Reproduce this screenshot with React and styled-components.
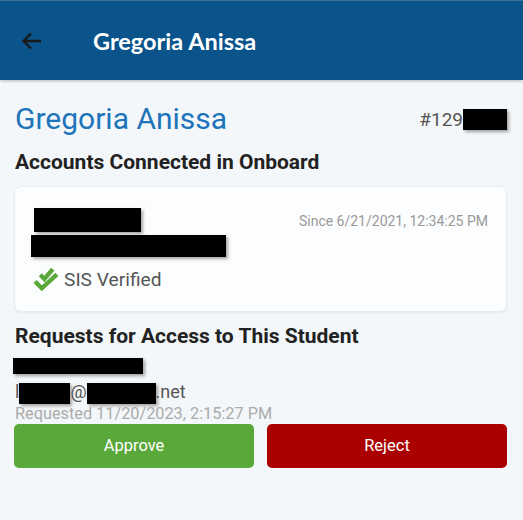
import React from 'react'
import styled, { createGlobalStyle } from 'styled-components'

const GlobalStyle = createGlobalStyle`
  html, body {
    margin: 0;
    padding: 0;
    background: #f4f7f9;
    font-family: Roboto, "Liberation Sans", sans-serif;
  }
`

const Page = styled.div`
  width: 523px;
  height: 520px;
  overflow: hidden;
  background: #f4f7f9;
`

const Header = styled.header`
  height: 79px;
  background: #0a538b;
  border-top: 1px solid #3a6f98;
  display: flex;
  align-items: center;
  box-shadow: 0 1px 3px rgba(0, 0, 0, 0.25);
  position: relative;
`

const BackButton = styled.button`
  width: 66px;
  height: 40px;
  padding: 0 0 0 20px;
  border: 0;
  background: none;
  display: flex;
  align-items: center;
`

const HeaderTitle = styled.h1`
  margin: 0 0 0 27px;
  color: #ffffff;
  font-family: Lato, "Open Sans", sans-serif;
  font-weight: 700;
  font-size: 23.5px;
`

const Content = styled.main`
  padding: 21px 16px 0 14px;
`

const TitleRow = styled.div`
  display: flex;
  align-items: center;
  justify-content: space-between;
`

const StudentName = styled.h2`
  margin: 0 0 0 1px;
  color: #1d74ba;
  font-weight: 400;
  font-size: 30px;
  line-height: 36px;
`

const StudentId = styled.div`
  color: #555;
  font-size: 19px;
  display: flex;
  align-items: center;
`

const Redact = styled.span`
  display: inline-block;
  background: #000;
  width: ${p => p.$w}px;
  height: ${p => p.$h}px;
  margin-left: ${p => p.$ml || 0}px;
  margin-top: ${p => p.$mt || 0}px;
  vertical-align: middle;
  box-shadow: 2px 2px 3px rgba(0, 0, 0, 0.35);
`

const SectionTitle = styled.h3`
  margin: ${p => p.$mt || 0}px 0 0 1px;
  color: #222;
  font-weight: 700;
  font-size: 21px;
  line-height: 26px;
`

const Card = styled.div`
  margin-top: 11px;
  background: #fcfdfe;
  border: 1px solid #e8ecef;
  border-radius: 7px;
  box-shadow: 0 1px 2px rgba(0, 0, 0, 0.06);
  height: 126px;
  box-sizing: border-box;
  padding: 21px 18px 0 16px;
  display: flex;
  justify-content: space-between;
`

const AccountInfo = styled.div`
  display: flex;
  flex-direction: column;
  align-items: flex-start;
`

const Since = styled.div`
  color: #9a9a9a;
  font-size: 14px;
  margin-top: 5px;
`

const Verified = styled.div`
  display: flex;
  align-items: center;
  margin-top: 9px;
  margin-left: 2px;
  color: #555;
  font-size: 19.2px;
  gap: 4px;
`

const Requester = styled.div`
  margin-top: 9px;
  display: flex;
  flex-direction: column;
  align-items: flex-start;
`

const Email = styled.div`
  margin-top: 7px;
  color: #555;
  font-size: 18px;
  line-height: 22px;
  margin-left: 1px;
`

const Requested = styled.div`
  color: #ababab;
  font-size: 16.3px;
  line-height: 19px;
  margin-left: 1px;
`

const Actions = styled.div`
  margin-top: 1px;
  display: grid;
  grid-template-columns: 1fr 1fr;
  gap: 13px;
`

const ActionButton = styled.button`
  height: 44px;
  border: 0;
  border-radius: 5px;
  background: ${p => p.$bg};
  color: #fff;
  font-family: Roboto, "Liberation Sans", sans-serif;
  font-size: 16.5px;
`

const BackArrow = () => (
  <svg width="24" height="24" viewBox="0 0 24 24">
    <path d="M21 12H4M11 4.5L3.5 12L11 19.5" fill="none" stroke="#1a1a1a" strokeWidth="2.4" />
  </svg>
)

const DoubleCheck = () => (
  <svg width="27" height="27" viewBox="0 0 26 26">
    <path d="M2 15L8.5 21.5L23 8" fill="none" stroke="#5aa839" strokeWidth="4.2" />
    <path d="M7 8.5L11 12.5L19 3" fill="none" stroke="#5aa839" strokeWidth="4.2" />
  </svg>
)

export default function App() {
  return (
    <Page>
      <GlobalStyle />
      <Header>
        <BackButton aria-label="Back">
          <BackArrow />
        </BackButton>
        <HeaderTitle>Gregoria Anissa</HeaderTitle>
      </Header>
      <Content>
        <TitleRow>
          <StudentName>Gregoria Anissa</StudentName>
          <StudentId>
            #129
            <Redact $w={44} $h={21} />
          </StudentId>
        </TitleRow>
        <SectionTitle $mt={12}>Accounts Connected in Onboard</SectionTitle>
        <Card>
          <AccountInfo>
            <Redact $w={107} $h={24} $ml={3} />
            <Redact $w={195} $h={22} $mt={3} />
            <Verified>
              <DoubleCheck />
              SIS Verified
            </Verified>
          </AccountInfo>
          <Since>Since 6/21/2021, 12:34:25 PM</Since>
        </Card>
        <SectionTitle $mt={11}>Requests for Access to This Student</SectionTitle>
        <Requester>
          <Redact $w={130} $h={16} $ml={-1} />
          <Email>
            l<Redact $w={51} $h={21} />@<Redact $w={69} $h={21} />.net
          </Email>
          <Requested>Requested 11/20/2023, 2:15:27 PM</Requested>
        </Requester>
        <Actions>
          <ActionButton $bg="#5aa839">Approve</ActionButton>
          <ActionButton $bg="#ab0000">Reject</ActionButton>
        </Actions>
      </Content>
    </Page>
  )
}
